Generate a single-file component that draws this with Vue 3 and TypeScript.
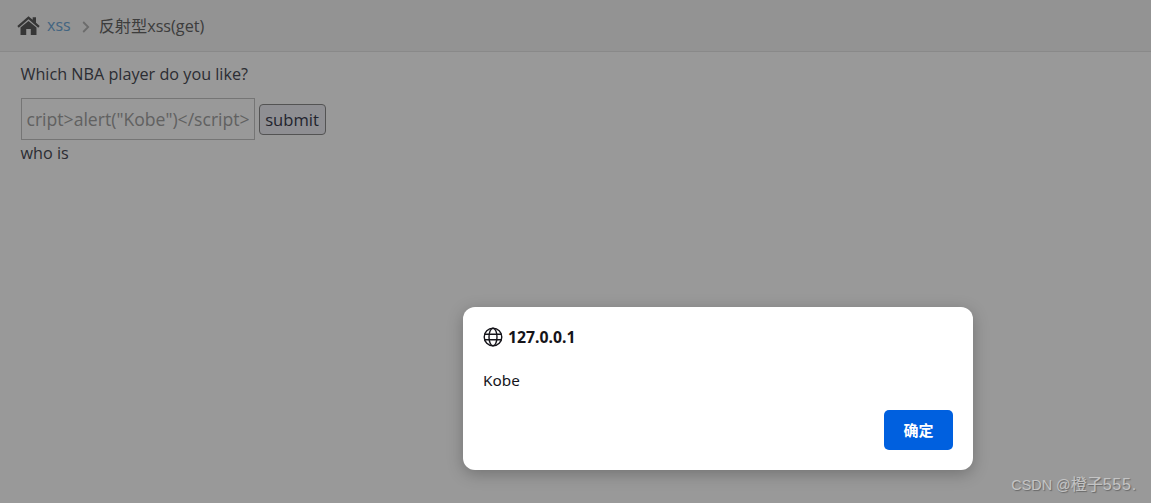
<script setup lang="ts">
const visiblePayload = 'cript>alert("Kobe")<\/script>'
</script>

<template>
  <div class="page">
    <header class="breadcrumbs">
      <svg class="home" viewBox="0 0 24 20" aria-hidden="true">
        <path d="M12 0.2 0.2 10.4 1.7 12.3 12 3.5 22.3 12.3 23.8 10.4 19.9 7V1.4H16.4V4Z" />
        <path d="M12 5.2 3.6 12.2V20H9.6V13.8H14.4V20H20.4V12.2Z" />
      </svg>
      <a class="link">xss</a>
      <svg class="chev" viewBox="0 0 8 12" aria-hidden="true">
        <path d="M1.2 1 6.2 6 1.2 11" />
      </svg>
      <span class="current">反射型xss(get)</span>
    </header>
    <main class="content">
      <p class="question">Which NBA player do you like?</p>
      <form class="form" @submit.prevent>
        <input class="input" type="text" :value="visiblePayload" readonly />
        <button class="submit" type="button">submit</button>
      </form>
      <p class="who">who is</p>
    </main>

    <div class="overlay"></div>

    <section class="dialog">
      <div class="origin">
        <svg class="globe" viewBox="0 0 20 20" aria-hidden="true">
          <circle cx="10" cy="10" r="8.8" />
          <ellipse cx="10" cy="10" rx="4" ry="8.8" />
          <path d="M1.2 7.2H18.8M1.2 12.8H18.8" />
        </svg>
        <span>127.0.0.1</span>
      </div>
      <p class="message">Kobe</p>
      <div class="actions">
        <button class="ok" type="button">确定</button>
      </div>
    </section>

    <div class="watermark"><span class="wm-latin">CSDN @</span>橙子<span class="wm-digits">555.</span></div>
  </div>
</template>

<style>
html, body { margin: 0; padding: 0; background: #fff; }
</style>

<style scoped>
.page {
  position: relative;
  width: 1151px;
  height: 503px;
  overflow: hidden;
  background: #fff;
  color: #3a3a3a;
  font-family: "Open Sans", "Noto Sans CJK SC", sans-serif;
  font-size: 16px;
}
.breadcrumbs {
  display: flex;
  align-items: center;
  height: 52px;
  box-sizing: border-box;
  padding: 0 0 2px 17px;
  background: #f5f5f5;
  border-bottom: 1px solid #e4e4e4;
}
.home { width: 23px; height: 19px; margin-top: 1px; fill: #5a5a5a; }
.link { margin-left: 7px; color: #6fa8d8; }
.chev { width: 8px; height: 12px; margin-left: 11px; margin-top: 5px; fill: none; stroke: #b4b4b4; stroke-width: 1.8; }
.current { margin-left: 9px; color: #666; font-size: 16.2px; }
.content { padding: 10px 0 0 20.5px; }
.question { margin: 0; line-height: 24px; color: #4a4c55; font-size: 16.2px; }
.form { display: flex; align-items: flex-end; margin-top: 12px; }
.input {
  box-sizing: border-box;
  width: 234px;
  height: 42px;
  margin: 0;
  padding: 0 5px;
  border: 1px solid #c4c4c4;
  border-radius: 0;
  outline: none;
  background: transparent;
  font-family: inherit;
  font-size: 17.6px;
  color: #a2a2a2;
}
.submit {
  box-sizing: border-box;
  width: 67px;
  height: 31px;
  margin: 0 0 5px 4px;
  padding: 0;
  border: 1px solid #8a8a8a;
  border-radius: 4px;
  background: #efeff6;
  color: #3a3c4e;
  font: inherit;
  font-size: 16.6px;
}
.who { margin: 0; line-height: 26px; color: #4a4c55; font-size: 16.2px; }
.overlay { position: absolute; inset: 0; background: rgba(0, 0, 0, 0.4); }
.dialog {
  position: absolute;
  left: 463px;
  top: 307px;
  box-sizing: border-box;
  width: 510px;
  height: 163px;
  padding: 19px 20px 20px;
  border-radius: 12px;
  background: #fff;
  box-shadow: 0 4px 16px rgba(0, 0, 0, 0.25);
  color: #15141a;
  font-family: "Noto Sans", "Noto Sans CJK SC", sans-serif;
}
.origin { display: flex; align-items: center; gap: 5px; height: 21px; font-size: 15.8px; font-weight: 700; }
.globe { width: 20px; height: 20px; fill: none; stroke: #15141a; stroke-width: 1.4; }
.message { margin: 23px 0 0; font-size: 15.3px; line-height: 20px; }
.actions { display: flex; justify-content: flex-end; margin-top: 20px; }
.ok {
  width: 69px;
  height: 40px;
  padding: 0 0 2px;
  border: 0;
  border-radius: 5px;
  background: #0060df;
  color: #fff;
  font: inherit;
  font-size: 15px;
  font-weight: 700;
}
.watermark {
  position: absolute;
  right: 14px;
  bottom: 8px;
  font-family: "Liberation Sans", "Noto Sans CJK SC", sans-serif;
  font-size: 16px;
  color: #c4c4c4;
  text-shadow: 1px 1px 1px rgba(70, 70, 70, 0.6);
}
.wm-latin { font-size: 14.4px; }
.wm-digits { letter-spacing: 0.8px; }
</style>
